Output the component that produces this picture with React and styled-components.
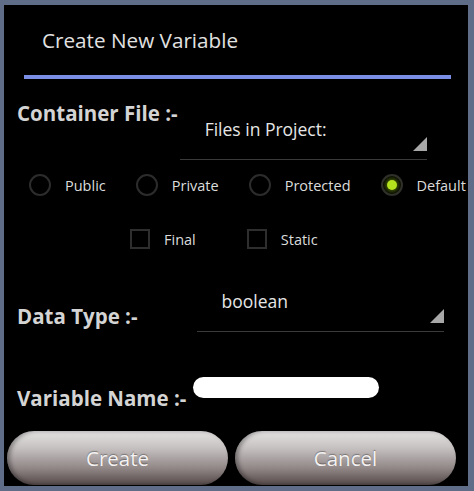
import React from "react"
import styled, { createGlobalStyle } from "styled-components"

const GlobalStyle = createGlobalStyle`
  html, body {
    margin: 0;
    padding: 0;
    background: #5f6d89;
  }
  * {
    box-sizing: border-box;
  }
`

export const Frame = styled.div`
  width: 474px;
  height: 491px;
  padding: 5px 6px 5px 4px;
  background: #5f6d89;
  font-family: "Open Sans", "Noto Sans", sans-serif;
`

export const Dialog = styled.div`
  width: 100%;
  height: 100%;
  background: #000;
  display: flex;
  flex-direction: column;
  overflow: hidden;
`

export const Title = styled.h1`
  margin: 0;
  padding: 21px 0 0 38px;
  height: 70px;
  font-size: 20.7px;
  font-weight: 400;
  line-height: 28px;
  color: #e2e2e2;
`

export const Divider = styled.div`
  height: 4px;
  margin: 0 17px 0 20px;
  background: #7b8ee6;
`

export const Row = styled.div`
  display: flex;
  align-items: ${p => p.$align || "flex-start"};
  padding-left: 13px;
  margin-top: ${p => p.$top || 0}px;
`

export const Label = styled.div`
  font-size: 20.5px;
  font-weight: 700;
  line-height: 26px;
  color: #d4d4d4;
  white-space: nowrap;
  margin-top: ${p => p.$top || 0}px;
  margin-bottom: ${p => p.$bottom || 0}px;
`

export const Spinner = styled.div`
  width: 247px;
  height: 60px;
  margin-left: ${p => p.$gap}px;
  padding: 18px 0 0 25px;
  display: flex;
  justify-content: space-between;
  border-bottom: 1px solid #3a3a3a;
`

export const SpinnerText = styled.span`
  font-size: 17.5px;
  line-height: 22px;
  color: #e6e6e6;
`

export const Triangle = styled.span`
  align-self: flex-end;
  width: 0;
  height: 0;
  margin-bottom: 8px;
  border-left: 14px solid transparent;
  border-bottom: 14px solid #a8a8a8;
`

export const OptionRow = styled.div`
  display: flex;
  align-items: center;
  gap: ${p => p.$gap}px;
  padding-left: ${p => p.$left}px;
  margin-top: ${p => p.$top}px;
  height: 26px;
`

export const Option = styled.label`
  display: flex;
  align-items: center;
  gap: 14px;
  font-size: 14.5px;
  color: #dcdcdc;
  white-space: nowrap;
`

export const Radio = styled.span`
  width: 22px;
  height: 22px;
  border-radius: 50%;
  border: 2px solid #2c2c2c;
  display: flex;
  align-items: center;
  justify-content: center;
  flex-shrink: 0;
  &::after {
    content: "";
    display: ${p => (p.$on ? "block" : "none")};
    width: 10px;
    height: 10px;
    border-radius: 50%;
    background: #b4e21c;
    box-shadow: 0 0 4px 2px rgba(150, 200, 20, 0.45);
  }
`

export const Check = styled.span`
  width: 20px;
  height: 20px;
  border: 2px solid #2e2e2e;
  flex-shrink: 0;
`

export const NameInput = styled.input`
  width: 186px;
  height: 21px;
  margin-left: ${p => p.$gap}px;
  border: none;
  border-radius: 11px;
  background: #fff;
  outline: none;
`

export const ButtonBar = styled.div`
  display: flex;
  gap: 7px;
  padding: 0 12px 1px 3px;
  margin-top: auto;
`

export const Button = styled.button`
  flex: 1;
  height: 54px;
  border: none;
  border-radius: 27px;
  background: linear-gradient(
    to bottom,
    #e4e2e2 0%,
    #c8c3c3 30%,
    #8f8585 70%,
    #554949 100%
  );
  box-shadow: inset 3px 0 4px rgba(0, 0, 0, 0.35);
  font-family: "Open Sans", "Noto Sans", sans-serif;
  font-size: 20.5px;
  color: #f4f2f2;
  text-shadow: 0 -1px 1px rgba(0, 0, 0, 0.35);
`

export default function App() {
  return (
    <Frame>
      <GlobalStyle />
      <Dialog>
        <Title>Create New Variable</Title>
        <Divider />
        <Row $top={21}>
          <Label>Container File :-</Label>
          <Spinner $gap={2}>
            <SpinnerText>Files in Project:</SpinnerText>
            <Triangle />
          </Spinner>
        </Row>
        <OptionRow $left={25} $gap={30} $top={12}>
          <Option><Radio />Public</Option>
          <Option><Radio />Private</Option>
          <Option><Radio />Protected</Option>
          <Option><Radio $on />Default</Option>
        </OptionRow>
        <OptionRow $left={126} $gap={51} $top={28}>
          <Option><Check />Final</Option>
          <Option><Check />Static</Option>
        </OptionRow>
        <Row $top={20} $align="flex-end">
          <Label $bottom={3}>Data Type :-</Label>
          <Spinner $gap={59}>
            <SpinnerText>boolean</SpinnerText>
            <Triangle />
          </Spinner>
        </Row>
        <Row $top={45}>
          <Label $top={8}>Variable Name :-</Label>
          <NameInput $gap={7} />
        </Row>
        <ButtonBar>
          <Button>Create</Button>
          <Button>Cancel</Button>
        </ButtonBar>
      </Dialog>
    </Frame>
  )
}
